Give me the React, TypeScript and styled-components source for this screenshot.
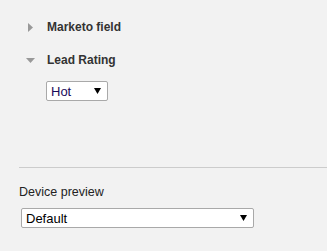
import React from "react";
import styled, { createGlobalStyle } from "styled-components";

const Global = createGlobalStyle`
  html, body {
    margin: 0;
    padding: 0;
    background: #f2f2f2;
    font-family: "Liberation Sans", Arial, sans-serif;
  }
`;

const Panel = styled.div`
  width: 327px;
  height: 251px;
  background: #f2f2f2;
  display: flex;
  flex-direction: column;
  overflow: hidden;
`;

const Tree = styled.div`
  padding: 19px 0 0 25px;
  display: flex;
  flex-direction: column;
`;

const Node = styled.div`
  display: flex;
  align-items: center;
  gap: 12px;
  height: 16px;
  margin-bottom: 17px;
  font-size: 12px;
  font-weight: bold;
  color: #333;
`;

const Arrow = styled.span`
  width: 10px;
  display: flex;
  justify-content: center;
`;

const Fake = styled.div<{ $w: number }>`
  width: ${(p) => p.$w}px;
  height: 20px;
  box-sizing: border-box;
  background: #fff;
  border: 1px solid #a9a9a9;
  border-radius: 2px;
  display: flex;
  align-items: center;
  justify-content: space-between;
  padding: 0 6px 0 4px;
  font-size: 13px;
  color: #000;
`;

const Nested = styled.div`
  padding-left: 21px;
  margin-top: -4px;
`;

const Divider = styled.hr`
  margin: 66px 0 0 19px;
  border: 0;
  border-top: 1px solid #ccc;
  height: 0;
`;

const Label = styled.div`
  margin: 17px 0 0 19px;
  font-size: 12.5px;
  color: #222;
`;

const SelectWrap = styled.div`
  margin: 9px 0 0 21px;
`;

const Caret = () => (
  <svg width="7" height="6" viewBox="0 0 7 6">
    <path d="M0 0H7L3.5 6Z" fill="#000" />
  </svg>
);

export default function App() {
  return (
    <Panel>
      <Global />
      <Tree>
        <Node>
          <Arrow>
            <svg width="5" height="9" viewBox="0 0 5 9">
              <path d="M0 0L5 4.5L0 9Z" fill="#999" />
            </svg>
          </Arrow>
          Marketo field
        </Node>
        <Node>
          <Arrow>
            <svg width="9" height="5" viewBox="0 0 9 5">
              <path d="M0 0H9L4.5 5Z" fill="#999" />
            </svg>
          </Arrow>
          Lead Rating
        </Node>
        <Nested>
          <Fake $w={62}>
            <span style={{ color: "#1a0a5a" }}>Hot</span>
            <Caret />
          </Fake>
        </Nested>
      </Tree>
      <Divider />
      <Label>Device preview</Label>
      <SelectWrap>
        <Fake $w={233}>
          <span>Default</span>
          <Caret />
        </Fake>
      </SelectWrap>
    </Panel>
  );
}
